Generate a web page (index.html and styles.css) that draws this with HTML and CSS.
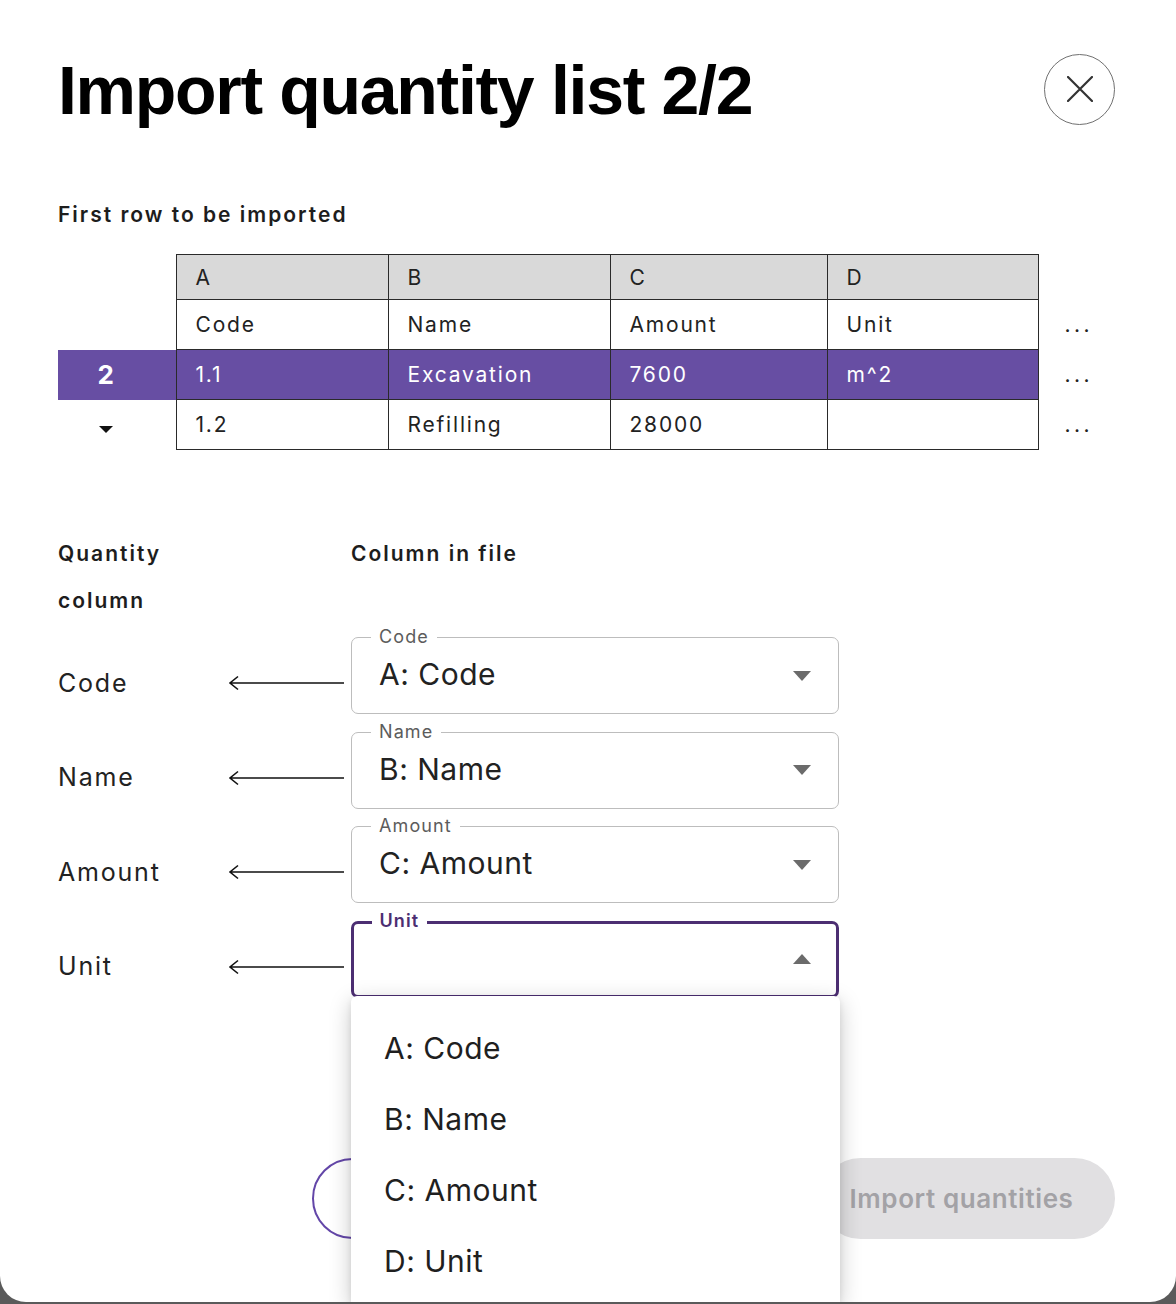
FILE: index.html
```html
<!DOCTYPE html>
<html lang="en">
<head>
<meta charset="utf-8">
<title>Import quantity list 2/2</title>
<link rel="stylesheet" href="styles.css">
</head>
<body>
<div class="modal">
  <header class="head">
    <h1 class="title">Import quantity list 2/2</h1>
    <button class="close" aria-label="Close">
      <svg width="26" height="26" viewBox="0 0 26 26"><path d="M1 1 L25 25 M25 1 L1 25" stroke="#333" stroke-width="2.2" fill="none" stroke-linecap="round"/></svg>
    </button>
  </header>

  <h2 class="subhead">First row to be imported</h2>

  <table class="preview">
    <colgroup>
      <col class="c-gut"><col class="c-a"><col class="c-b"><col class="c-c"><col class="c-d"><col class="c-more">
    </colgroup>
    <tr class="hdr"><td class="gut"></td><td>A</td><td>B</td><td>C</td><td>D</td><td class="more"></td></tr>
    <tr class="row"><td class="gut"></td><td>Code</td><td>Name</td><td>Amount</td><td>Unit</td><td class="more">...</td></tr>
    <tr class="row sel"><td class="gut num">2</td><td>1.1</td><td>Excavation</td><td>7600</td><td>m^2</td><td class="more">...</td></tr>
    <tr class="row"><td class="gut"><span class="tri"></span></td><td>1.2</td><td>Refilling</td><td>28000</td><td></td><td class="more">...</td></tr>
  </table>

  <section class="mapping">
    <div class="map-head">
      <h3 class="colhead qcol">Quantity column</h3>
      <h3 class="colhead">Column in file</h3>
    </div>

    <div class="map-row">
      <span class="qlabel">Code</span>
      <svg class="arrow" width="117" height="16" viewBox="0 0 117 16"><path d="M2 8 H116 M10 1.5 L2 8 L10 14.5" stroke="#111" stroke-width="1.6" fill="none"/></svg>
      <div class="field">
        <span class="flabel">Code</span>
        <span class="fvalue">A: Code</span>
        <span class="caret"></span>
      </div>
    </div>

    <div class="map-row">
      <span class="qlabel">Name</span>
      <svg class="arrow" width="117" height="16" viewBox="0 0 117 16"><path d="M2 8 H116 M10 1.5 L2 8 L10 14.5" stroke="#111" stroke-width="1.6" fill="none"/></svg>
      <div class="field">
        <span class="flabel">Name</span>
        <span class="fvalue">B: Name</span>
        <span class="caret"></span>
      </div>
    </div>

    <div class="map-row">
      <span class="qlabel">Amount</span>
      <svg class="arrow" width="117" height="16" viewBox="0 0 117 16"><path d="M2 8 H116 M10 1.5 L2 8 L10 14.5" stroke="#111" stroke-width="1.6" fill="none"/></svg>
      <div class="field">
        <span class="flabel">Amount</span>
        <span class="fvalue">C: Amount</span>
        <span class="caret"></span>
      </div>
    </div>

    <div class="map-row">
      <span class="qlabel">Unit</span>
      <svg class="arrow" width="117" height="16" viewBox="0 0 117 16"><path d="M2 8 H116 M10 1.5 L2 8 L10 14.5" stroke="#111" stroke-width="1.6" fill="none"/></svg>
      <div class="field focused">
        <span class="flabel">Unit</span>
        <span class="fvalue"></span>
        <span class="caret up"></span>
        <ul class="menu">
          <li>A: Code</li>
          <li>B: Name</li>
          <li>C: Amount</li>
          <li>D: Unit</li>
        </ul>
      </div>
    </div>
  </section>

  <div class="actions">
    <button class="btn outline" aria-label="Back"></button>
    <button class="btn primary" disabled>Import quantities</button>
  </div>
</div>
</body>
</html>
```

FILE: styles.css
```css
html, body {
  margin: 0;
  padding: 0;
  background: #5a5a5a;
  overflow: hidden;
}

body {
  font-family: Inter, "Liberation Sans", sans-serif;
  color: #222;
}

.modal {
  position: relative;
  height: 1302px;
  background: #fff;
  border-radius: 0 0 26px 26px;
  padding: 50px 61px 0 58px;
  box-sizing: border-box;
}

.head {
  display: flex;
  justify-content: space-between;
  align-items: center;
  height: 80px;
}

.title {
  margin: 0;
  font-family: "Liberation Sans", Arial, sans-serif;
  font-weight: 700;
  font-size: 68px;
  line-height: 80px;
  letter-spacing: -1.3px;
  color: #000;
}

.close {
  width: 71px;
  height: 71px;
  border-radius: 50%;
  border: 1.5px solid #707070;
  background: #fff;
  display: flex;
  align-items: center;
  justify-content: center;
  padding: 0;
  margin: -2px 0 0 0;
}

.subhead {
  margin: 70px 0 0;
  font-size: 21px;
  line-height: 30px;
  font-weight: 600;
  letter-spacing: 2px;
  color: #1d1d1d;
}

.preview {
  margin-top: 24px;
  border-collapse: collapse;
  table-layout: fixed;
  width: 1057px;
  font-size: 21px;
  letter-spacing: 1.8px;
  color: #222;
}

.c-gut { width: 118px; }
.c-a { width: 212px; }
.c-b { width: 222px; }
.c-c { width: 217px; }
.c-d { width: 211px; }
.c-more { width: 77px; }

.preview td {
  border: 1px solid #2a2a2a;
  padding: 0 0 0 19px;
  vertical-align: middle;
  white-space: nowrap;
}

.preview td.gut,
.preview td.more {
  border: none;
}

.preview .hdr { height: 45px; }
.preview .row { height: 50px; }

.preview .hdr td:not(.gut):not(.more) {
  background: #d9d9d9;
}

.preview .sel td:not(.more) {
  background: #674ea3;
  color: #fff;
}

.preview td.gut {
  padding: 0 22px 0 0;
  text-align: center;
}

.preview td.num {
  font-weight: 700;
  font-size: 26px;
  letter-spacing: 0;
}

.tri {
  display: inline-block;
  width: 0;
  height: 0;
  border-left: 7px solid transparent;
  border-right: 7px solid transparent;
  border-top: 7px solid #111;
  margin-top: 6px;
  vertical-align: middle;
}

.preview td.more {
  padding-left: 26px;
  letter-spacing: 3.5px;
}

.mapping {
  margin-top: 80px;
}

.map-head {
  display: grid;
  grid-template-columns: 293px 1fr;
}

.colhead {
  margin: 0;
  font-size: 21px;
  line-height: 47px;
  font-weight: 600;
  letter-spacing: 2px;
  color: #1d1d1d;
}

.qcol {
  max-width: 170px;
}

.map-row {
  display: grid;
  grid-template-columns: 170px 123px 488px;
  align-items: center;
  margin-top: 17.5px;
}

.map-head + .map-row {
  margin-top: 13px;
}

.qlabel {
  font-size: 25px;
  letter-spacing: 1.8px;
  color: #222;
  margin-top: 14px;
}

.arrow {
  display: block;
  margin-top: 15px;
}

.field {
  position: relative;
  height: 77px;
  border: 1.5px solid #bdbdbd;
  border-radius: 7px;
  box-sizing: border-box;
  display: flex;
  align-items: center;
  justify-content: space-between;
  padding: 0 27px 3px 27px;
}

.flabel {
  position: absolute;
  top: -13px;
  left: 19px;
  padding: 0 8px;
  background: #fff;
  font-size: 18px;
  line-height: 24px;
  letter-spacing: 1.1px;
  color: #5c5c5c;
}

.fvalue {
  font-size: 30px;
  letter-spacing: 0.5px;
  color: #222;
}

.caret {
  width: 0;
  height: 0;
  border-left: 9.5px solid transparent;
  border-right: 9.5px solid transparent;
  border-top: 10px solid #6b6b6b;
  margin-top: 3px;
}

.caret.up {
  border-top: none;
  border-bottom: 10px solid #6b6b6b;
  margin-top: 0;
}

.field.focused {
  border: 3px solid #4c2e72;
  padding: 0 25.5px 0 25.5px;
}

.field.focused .flabel {
  top: -14.5px;
  left: 17.5px;
  color: #4c2e72;
  font-weight: 600;
}

.menu {
  position: absolute;
  top: calc(100% + 1px);
  left: -3px;
  width: 489px;
  height: 306px;
  margin: 0;
  padding: 17px 0 0;
  list-style: none;
  background: #fff;
  border-radius: 6px 6px 0 0;
  box-shadow: 0 6px 22px rgba(0, 0, 0, 0.22), 0 2px 6px rgba(0, 0, 0, 0.08);
  box-sizing: border-box;
  z-index: 5;
}

.menu li {
  height: 71px;
  line-height: 71px;
  padding-left: 33px;
  font-size: 30px;
  letter-spacing: 0.5px;
  color: #1f1f1f;
}

.actions {
  display: flex;
  justify-content: flex-end;
  gap: 20px;
  margin-top: 160px;
}

.btn {
  height: 81px;
  border-radius: 41px;
  font-family: Inter, "Liberation Sans", sans-serif;
  font-size: 26px;
  font-weight: 600;
  letter-spacing: 0.6px;
}

.btn.outline {
  width: 488px;
  background: #fff;
  border: 2px solid #6346a8;
  color: #6346a8;
}

.btn.primary {
  width: 295px;
  padding: 0 12px 0 0;
  background: #e1e0e2;
  border: none;
  color: #a3a2a6;
}
```
